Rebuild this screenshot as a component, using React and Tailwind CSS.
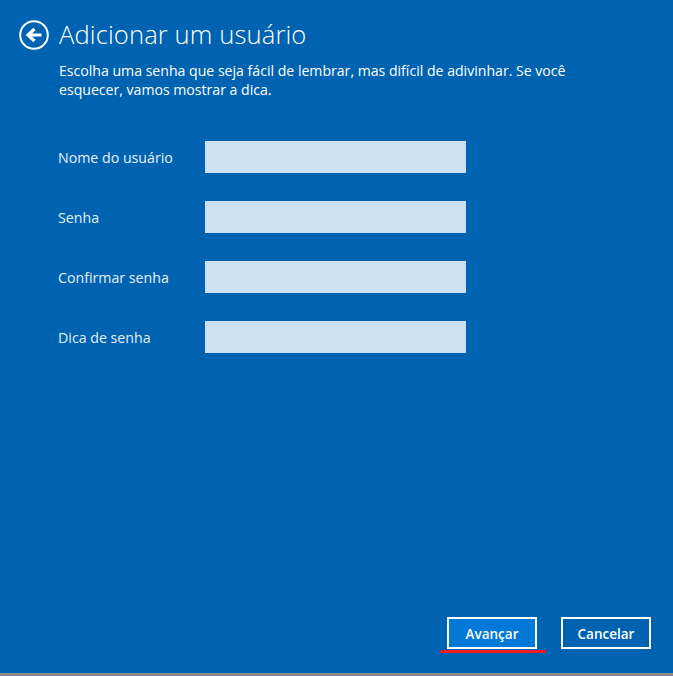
import React from 'react';

const FIELDS = ['Nome do usuário', 'Senha', 'Confirmar senha', 'Dica de senha'];
const FONT = "font-['Open_Sans',sans-serif]";

export default function App() {
  return (
    <div className={`w-[673px] h-[676px] flex flex-col bg-[#0063b1] text-white overflow-hidden ${FONT}`}>
      <div className="h-[673px] flex flex-col">
        {/* header */}
        <div className="flex items-center pt-[20px] pl-[19px] gap-[10px]">
          <svg width="30" height="30" viewBox="0 0 30 30" fill="none">
            <circle cx="15" cy="15" r="13.8" stroke="white" strokeWidth="2" />
            <path d="M22.5 15H10M15.5 9L9 15L15.5 21" stroke="white" strokeWidth="3.2" />
          </svg>
          <h1 className="text-[25.6px] leading-[30px] font-light tracking-[0.1px] -mt-[1px]">Adicionar um usuário</h1>
        </div>

        <p className="mt-[11px] ml-[59px] w-[540px] text-[14.1px] leading-[19px]">
          Escolha uma senha que seja fácil de lembrar, mas difícil de adivinhar. Se você esquecer, vamos mostrar a dica.
        </p>

        {/* form */}
        <div className="mt-[42px] ml-[58px] flex flex-col gap-[28px]">
          {FIELDS.map((label) => (
            <div key={label} className="flex items-center h-[32px]">
              <label className="w-[147px] pt-[1px] text-[14.2px] text-[#e6f0f8]">{label}</label>
              <div className="w-[261px] h-[32px] bg-[#cce0ef]" />
            </div>
          ))}
        </div>

        {/* buttons */}
        <div className="mt-auto mb-[24px] mr-[22px] flex justify-end gap-[24px]">
          <div className="relative">
            <button className="w-[90px] h-[32px] pt-[3px] border-[2px] border-white bg-[#0078d7] text-[13.5px] font-semibold leading-none">
              Avançar
            </button>
            <div className="absolute left-[-7px] top-[33px] w-[106px] h-[3px] rounded-full bg-[#ed1c24]" />
          </div>
          <button className="w-[90px] h-[32px] pt-[3px] border-[2px] border-white text-[13.5px] font-semibold leading-none">
            Cancelar
          </button>
        </div>
      </div>
      <div className="h-[3px] bg-[#8c8c8c]" />
    </div>
  );
}
